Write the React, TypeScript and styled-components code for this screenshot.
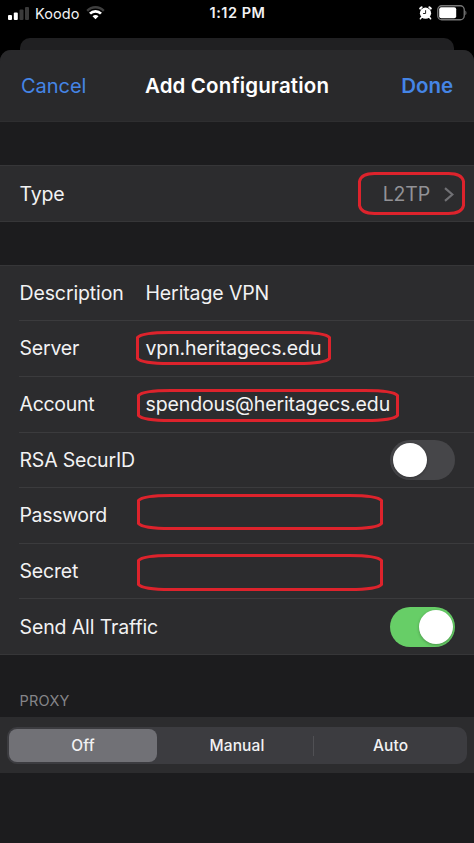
import React from 'react';
import styled, { createGlobalStyle } from 'styled-components';

const GlobalStyle = createGlobalStyle`
  *, *::before, *::after { box-sizing: border-box; }
  html, body { margin: 0; background: #000; }
  body { font-family: Inter, "Liberation Sans", sans-serif; color: #f2f2f3; overflow: hidden; }
`;

const Screen = styled.div`
  width: 474px;
  height: 843px;
  background: #000;
  overflow: hidden;
  display: flex;
  flex-direction: column;
`;

const StatusBar = styled.header`
  height: 38px;
  flex: none;
  display: grid;
  grid-template-columns: 1fr auto 1fr;
  align-items: start;
  padding: 0 7px 0 8px;
`;

const StatusSide = styled.div<{ $end?: boolean }>`
  display: flex;
  height: 26px;
  align-items: center;
  gap: ${p => (p.$end ? 5 : 6)}px;
  justify-content: ${p => (p.$end ? 'flex-end' : 'flex-start')};
`;

const Carrier = styled.span`
  font-size: 14.5px;
  letter-spacing: 0.1px;
`;

const Clock = styled.span`
  font-size: 14.5px;
  font-weight: 600;
  line-height: 26px;
  letter-spacing: 0.5px;
`;

const BackCard = styled.div`
  height: 12px;
  flex: none;
  margin: 0 20px;
  background: #202022;
  border-radius: 10px 10px 0 0;
`;

const Sheet = styled.main`
  flex: 1;
  display: flex;
  flex-direction: column;
  background: #1c1c1e;
  border-radius: 11px 11px 0 0;
  overflow: hidden;
`;

const NavBar = styled.nav`
  height: 72px;
  flex: none;
  display: grid;
  grid-template-columns: 1fr auto 1fr;
  align-items: center;
  padding: 0 21px;
  background: #29292b;
  border-bottom: 1px solid #2e2e30;
`;

const NavButton = styled.button<{ $strong?: boolean }>`
  border: 0;
  padding: 0;
  background: none;
  font: ${p => (p.$strong ? '600 20.5px' : '400 20px')} Inter, sans-serif;
  letter-spacing: -0.05px;
  color: #4585e6;
  justify-self: ${p => (p.$strong ? 'end' : 'start')};
`;

const Title = styled.h1`
  margin: 0;
  font-size: 20.5px;
  font-weight: 600;
  letter-spacing: 0.15px;
  color: #fff;
`;

const Group = styled.section`
  flex: none;
  margin-top: 43px;
  background: #2c2c2e;
  border-top: 1px solid #363638;
  border-bottom: 1px solid #363638;
`;

const Row = styled.div<{ $height: number; $shift?: number }>`
  position: relative;
  height: ${p => p.$height}px;
  display: grid;
  grid-template-columns: 126px 1fr auto;
  align-items: center;
  padding: ${p => p.$shift || 0}px 19px 0 19.5px;
  white-space: nowrap;
  &:not(:first-child)::before {
    content: '';
    position: absolute;
    top: 0;
    left: 19px;
    right: 0;
    height: 1px;
    background: #3b3b3d;
  }
`;

const Label = styled.span<{ $track?: number }>`
  font-size: 19.5px;
  line-height: 24px;
  letter-spacing: ${p => p.$track ?? -0.2}px;
`;

const Value = styled(Label)<{ $muted?: boolean }>`
  color: ${p => (p.$muted ? '#929296' : '#f2f2f3')};
`;

const Disclosure = styled.span`
  display: flex;
  align-items: center;
  gap: 14px;
  grid-column: 3;
  margin-right: 1px;
`;

const Outline = styled.svg<{ $x: number; $y: number }>`
  position: absolute;
  left: ${p => p.$x}px;
  top: ${p => p.$y}px;
  fill: none;
  stroke: #dd232c;
  stroke-width: 3px;
  stroke-linejoin: round;
`;

type RingProps = { x: number; y: number; w: number; h: number; rx?: number; ry?: number; bend?: number };

// A hand-marked outline: long shallow corners that meet short straight sides.
const Ring = ({ x, y, w, h, rx = 32, ry = 5, bend = 0.3 }: RingProps) => {
  const l = 1.5;
  const t = 1.5;
  const r = w - 1.5;
  const b = h - 1.5;
  const cx = rx * bend;
  const cy = ry * 0.35;
  const d = [
    `M${l + rx} ${t} H${r - rx}`,
    `C${r - cx * 1.6} ${t} ${r - cx * 0.3} ${t + cy} ${r} ${t + ry}`,
    `V${b - ry}`,
    `C${r - cx * 0.3} ${b - cy} ${r - cx * 1.6} ${b} ${r - rx} ${b}`,
    `H${l + rx}`,
    `C${l + cx * 1.6} ${b} ${l + cx * 0.3} ${b - cy} ${l} ${b - ry}`,
    `V${t + ry}`,
    `C${l + cx * 0.3} ${t + cy} ${l + cx * 1.6} ${t} ${l + rx} ${t} Z`,
  ].join(' ');
  return (
    <Outline $x={x} $y={y} width={w} height={h} viewBox={`0 0 ${w} ${h}`}>
      <path d={d} />
    </Outline>
  );
};

const Switch = styled.span<{ $on?: boolean }>`
  grid-column: 3;
  width: 65px;
  height: 40px;
  padding: 3px 2.5px;
  border-radius: 20px;
  display: flex;
  justify-content: ${p => (p.$on ? 'flex-end' : 'flex-start')};
  background: ${p => (p.$on ? '#67ce67' : '#464649')};
`;

const Knob = styled.span`
  width: 34px;
  height: 34px;
  border-radius: 50%;
  background: #fff;
  box-shadow: 0 1px 3px rgba(0, 0, 0, 0.3);
`;

const SectionTitle = styled.h2`
  margin: 36px 0 0 19.5px;
  height: 26px;
  font-size: 14.5px;
  line-height: 20px;
  font-weight: 400;
  letter-spacing: 0.25px;
  color: #858589;
`;

const SegmentBand = styled.section`
  flex: none;
  height: 56px;
  padding: 10px 7px 9px;
  background: #2c2c2e;
`;

const Segments = styled.div`
  height: 37px;
  display: grid;
  grid-template-columns: 1fr 1fr 1fr;
  align-items: center;
  padding: 2px;
  border-radius: 10px;
  background: #3c3c40;
`;

const Segment = styled.span<{ $on?: boolean; $rule?: boolean }>`
  height: ${p => (p.$on ? 33 : 20)}px;
  width: ${p => (p.$on ? '148px' : 'auto')};
  display: flex;
  align-items: center;
  justify-content: center;
  padding-left: ${p => (p.$rule ? 2 : 0)}px;
  font-size: 15.5px;
  font-weight: 500;
  letter-spacing: 0.1px;
  border-radius: ${p => (p.$on ? 8 : 0)}px;
  background: ${p => (p.$on ? '#717176' : 'none')};
  border-left: ${p => (p.$rule ? '1px solid #505054' : '0')};
`;

const SignalIcon = () => (
  <svg width="21" height="13" viewBox="0 0 21 13">
    <rect x="0" y="8" width="4" height="5" rx="1" fill="#fff" />
    <rect x="5.8" y="5.5" width="4" height="7.5" rx="1" fill="#fff" />
    <rect x="11.5" y="2.5" width="4" height="10.5" rx="1" fill="#3a3a3a" />
    <rect x="17" y="0" width="4" height="13" rx="1" fill="#3a3a3a" />
  </svg>
);

const WifiIcon = () => (
  <svg width="19" height="14" viewBox="0 0 19 14" fill="none">
    <path d="M1.2 4.9 C5.8 0 13.2 0 17.8 4.9" stroke="#3f3f3f" strokeWidth="2.3" />
    <path d="M4 7.7 C7 4.5 12 4.5 15 7.7" stroke="#fff" strokeWidth="2.7" />
    <path d="M6.5 10.3 C8.3 8.7 10.7 8.7 12.5 10.3 L9.5 13.2 Z" fill="#fff" />
  </svg>
);

const AlarmIcon = () => (
  <svg width="13" height="14" viewBox="0 0 13 14" fill="none">
    <path d="M1.2 2.6 L2.6 1.3 M10.4 1.3 L11.8 2.6" stroke="#fff" strokeWidth="2" strokeLinecap="round" />
    <path d="M2.5 11.3 L1.4 12.8 M10.5 11.3 L11.6 12.8" stroke="#fff" strokeWidth="1.5" strokeLinecap="round" />
    <circle cx="6.5" cy="7.2" r="5.6" fill="#fff" />
    <path d="M6.6 4.2 V7.5 H4.1" stroke="#222" strokeWidth="1" />
  </svg>
);

const BatteryIcon = () => (
  <svg width="30" height="16" viewBox="0 0 30 16">
    <rect x="0.75" y="0.75" width="26.5" height="14" rx="4" fill="none" stroke="#777" strokeWidth="1.3" />
    <rect x="2.2" y="2.3" width="17" height="11" rx="2" fill="#fff" />
    <path d="M28.4 5.4 C29.8 6.2 29.8 9.4 28.4 10.2 Z" fill="#777" />
  </svg>
);

const Chevron = () => (
  <svg width="10" height="15" viewBox="0 0 10 15" fill="none">
    <path d="M1 1.2 L8.4 7.5 L1 13.8" stroke="#707074" strokeWidth="2.2" />
  </svg>
);

export default function App() {
  return (
    <>
      <GlobalStyle />
      <Screen>
        <StatusBar>
          <StatusSide>
            <SignalIcon />
            <Carrier>Koodo</Carrier>
            <WifiIcon />
          </StatusSide>
          <Clock>1:12 PM</Clock>
          <StatusSide $end>
            <AlarmIcon />
            <BatteryIcon />
          </StatusSide>
        </StatusBar>
        <BackCard />
        <Sheet>
          <NavBar>
            <NavButton>Cancel</NavButton>
            <Title>Add Configuration</Title>
            <NavButton $strong>Done</NavButton>
          </NavBar>
          <Group>
            <Row $height={55} $shift={1}>
              <Label>Type</Label>
              <Disclosure>
                <Value $muted $track={-0.15}>L2TP</Value>
                <Chevron />
              </Disclosure>
              <Ring x={358} y={6} w={107} h={43} rx={15} ry={8} bend={0.22} />
            </Row>
          </Group>
          <Group>
            <Row $height={54}>
              <Label $track={-0.12}>Description</Label>
              <Value $track={-0.12}>Heritage VPN</Value>
            </Row>
            <Row $height={56}>
              <Label>Server</Label>
              <Value $track={-0.12}>vpn.heritagecs.edu</Value>
              <Ring x={136} y={11} w={195} h={34} />
            </Row>
            <Row $height={56}>
              <Label $track={-0.3}>Account</Label>
              <Value $track={-0.12}>spendous@heritagecs.edu</Value>
              <Ring x={137} y={13} w={262} h={33} />
            </Row>
            <Row $height={55} $shift={1}>
              <Label>RSA SecurID</Label>
              <Switch><Knob /></Switch>
            </Row>
            <Row $height={56}>
              <Label $track={-0.35}>Password</Label>
              <Ring x={137} y={7} w={246} h={36} />
            </Row>
            <Row $height={55}>
              <Label>Secret</Label>
              <Ring x={137} y={11} w={246} h={37} />
            </Row>
            <Row $height={56} $shift={2}>
              <Label $track={-0.12}>Send All Traffic</Label>
              <Switch $on><Knob /></Switch>
            </Row>
          </Group>
          <SectionTitle>PROXY</SectionTitle>
          <SegmentBand>
            <Segments>
              <Segment $on>Off</Segment>
              <Segment>Manual</Segment>
              <Segment $rule>Auto</Segment>
            </Segments>
          </SegmentBand>
        </Sheet>
      </Screen>
    </>
  );
}
